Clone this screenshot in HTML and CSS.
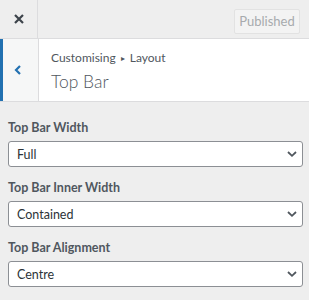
FILE: index.html
```html
<!DOCTYPE html>
<html>
<head>
<meta charset="utf-8">
<link rel="stylesheet" href="styles.css">
</head>
<body>
<div class="topbar">
  <div class="close">
    <svg width="12" height="12" viewBox="0 0 12 12"><path d="M2 2 L10 10 M10 2 L2 10" stroke="#3c434a" stroke-width="2.2" fill="none"/></svg>
  </div>
  <div class="spacer"></div>
  <div class="publish">Published</div>
</div>
<div class="section">
  <div class="back">
    <svg width="10" height="14" viewBox="0 0 10 14"><path d="M7 3 L3 7 L7 11" stroke="#2271b1" stroke-width="2.2" fill="none"/></svg>
  </div>
  <div class="titles">
    <div class="crumb">Customising <span class="tri">▸</span> Layout</div>
    <div class="title">Top Bar</div>
  </div>
</div>
<div class="controls">
  <div class="control">
    <div class="label">Top Bar Width</div>
    <div class="select"><span>Full</span><svg width="12" height="8" viewBox="0 0 12 8"><path d="M2 2 L6 5.8 L10 2" stroke="#50575e" stroke-width="1.8" fill="none"/></svg></div>
  </div>
  <div class="control">
    <div class="label">Top Bar Inner Width</div>
    <div class="select"><span>Contained</span><svg width="12" height="8" viewBox="0 0 12 8"><path d="M2 2 L6 5.8 L10 2" stroke="#50575e" stroke-width="1.8" fill="none"/></svg></div>
  </div>
  <div class="control">
    <div class="label">Top Bar Alignment</div>
    <div class="select"><span>Centre</span><svg width="12" height="8" viewBox="0 0 12 8"><path d="M2 2 L6 5.8 L10 2" stroke="#50575e" stroke-width="1.8" fill="none"/></svg></div>
  </div>
</div>
</body>
</html>
```
FILE: styles.css
```css
html, body {
  margin: 0;
  padding: 0;
  background: #eeeeee;
  font-family: "Lato", "Noto Sans", sans-serif;
  color: #50575e;
}
.topbar {
  display: flex;
  align-items: center;
  height: 38px;
  border-bottom: 1px solid #dcdcde;
  background: #eeeeee;
}
.close {
  width: 38px;
  height: 38px;
  border-right: 1px solid #dcdcde;
  display: flex;
  align-items: center;
  justify-content: center;
  box-sizing: border-box;
}
.spacer { flex: 1; }
.publish {
  width: 66px;
  height: 25px;
  box-sizing: border-box;
  border: 1px solid #e2e2e2;
  background: #f3f3f3;
  border-radius: 2px;
  color: #a7aaad;
  font-size: 13px;
  display: flex;
  align-items: center;
  justify-content: center;
  margin-right: 9px;
  margin-top: 4px;
}
.section {
  display: flex;
  height: 62px;
  background: #fff;
  border-bottom: 1px solid #dcdcde;
}
.back {
  width: 39px;
  box-sizing: border-box;
  border-left: 3px solid #2271b1;
  border-right: 1px solid #dcdcde;
  background: #f6f7f7;
  display: flex;
  align-items: center;
  justify-content: center;
  padding-right: 6px;
}
.titles {
  padding: 10px 0 0 12px;
}
.crumb {
  font-size: 12px;
  line-height: 18px;
  color: #50575e;
}
.tri { font-size: 8px; position: relative; top: -1px; margin: 0 2px; }
.title {
  font-size: 17.5px;
  font-weight: 300;
  line-height: 26px;
  margin-top: 1px;
  color: #50575e;
}
.controls {
  padding: 16px 6px 0 8px;
}
.control {
  margin-bottom: 11px;
}
.label {
  font-size: 12.5px;
  font-weight: 700;
  line-height: 20px;
  margin-bottom: 3px;
  color: #50575e;
}
.select {
  height: 26px;
  box-sizing: border-box;
  border: 1px solid #8c8f94;
  border-radius: 3px;
  background: #fff;
  display: flex;
  align-items: center;
  justify-content: space-between;
  padding: 0 4px 0 8px;
  font-size: 12.5px;
  color: #2c3338;
}
```
